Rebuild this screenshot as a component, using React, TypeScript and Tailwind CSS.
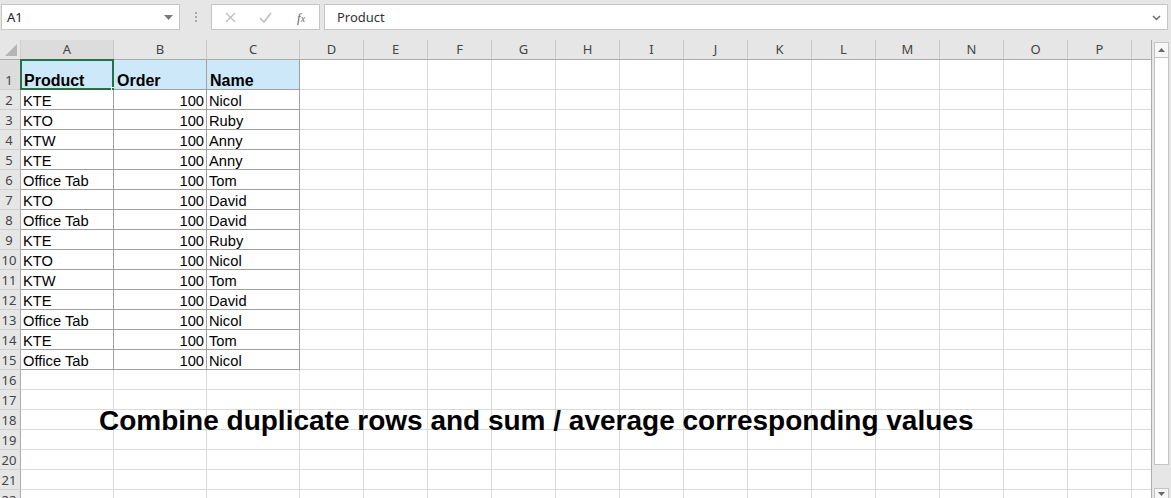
import React from "react";

const COLS = ["A", "B", "C", "D", "E", "F", "G", "H", "I", "J", "K", "L", "M", "N", "O", "P"];
const data: [string, string, string][] = [
  ["KTE", "100", "Nicol"],
  ["KTO", "100", "Ruby"],
  ["KTW", "100", "Anny"],
  ["KTE", "100", "Anny"],
  ["Office Tab", "100", "Tom"],
  ["KTO", "100", "David"],
  ["Office Tab", "100", "David"],
  ["KTE", "100", "Ruby"],
  ["KTO", "100", "Nicol"],
  ["KTW", "100", "Tom"],
  ["KTE", "100", "David"],
  ["Office Tab", "100", "Nicol"],
  ["KTE", "100", "Tom"],
  ["Office Tab", "100", "Nicol"],
];

const ui = { fontFamily: '"Segoe UI", "Noto Sans", "Open Sans", sans-serif' };
const cellFont = { fontFamily: '"Liberation Sans", Arial, sans-serif' };

export default function App() {
  const rows = Array.from({ length: 22 }, (_, i) => i + 1);
  return (
    <div className="relative w-[1171px] h-[498px] overflow-hidden bg-[#e6e6e6]" style={ui}>
      {/* formula bar */}
      <div className="flex h-[40px] pt-[4px] items-start">
        <div className="ml-[1px] w-[179px] h-[26px] bg-white border border-[#c6c6c6] flex items-center pl-[5px] pr-[6px] pt-[1px]">
          <span className="text-[13px] text-[#222] flex-1">A1</span>
          <svg width="9" height="5" viewBox="0 0 9 5"><path d="M0 0h9L4.5 5z" fill="#7a7a7a" /></svg>
        </div>
        <div className="w-[31px] h-[26px] flex flex-col items-center justify-center gap-[2px]">
          <div className="w-[2px] h-[2px] bg-[#a8a8a8]" />
          <div className="w-[2px] h-[2px] bg-[#a8a8a8]" />
          <div className="w-[2px] h-[2px] bg-[#a8a8a8]" />
        </div>
        <div className="w-[109px] h-[26px] bg-white border border-[#c6c6c6] flex items-center pt-[1px]">
          <div className="w-[36px] flex justify-center pl-[2px]">
            <svg width="11" height="11" viewBox="0 0 11 11"><path d="M1 1l9 9M10 1l-9 9" stroke="#bdbdbd" strokeWidth="1.3" /></svg>
          </div>
          <div className="w-[36px] flex justify-center">
            <svg width="13" height="11" viewBox="0 0 13 11"><path d="M1 6l4 4 7-9" stroke="#bdbdbd" strokeWidth="1.6" fill="none" /></svg>
          </div>
          <div className="w-[36px] flex justify-center">
            <span className="text-[13px] italic text-[#666]" style={{ fontFamily: '"Liberation Serif", serif' }}>f<span className="text-[10px]">x</span></span>
          </div>
        </div>
        <div className="ml-[4px] w-[844px] h-[26px] bg-white border border-[#c6c6c6] flex items-center pl-[12px] pr-[6px] pt-[1px]">
          <span className="text-[13px] text-[#333] flex-1">Product</span>
          <svg width="9" height="6" viewBox="0 0 9 6"><path d="M1 1l3.5 3.5L8 1" stroke="#6a6a6a" strokeWidth="1.5" fill="none" /></svg>
        </div>
      </div>

      {/* sheet */}
      <div className="flex">
        <div className="w-[1152px] border-r border-[#ababab]">
          <div className="grid" style={{ gridTemplateColumns: "21px 93px 93px 93px repeat(13, 64px) 1fr" }}>
            {/* header row */}
            <div className="h-[20px] bg-[#e6e6e6] border-b border-[#ababab] border-r border-r-[#d0d0d0] flex items-end justify-end pr-[3px] pb-[3px]">
              <svg width="12" height="12" viewBox="0 0 12 12"><path d="M12 0V12H0z" fill="#b5b5b5" /></svg>
            </div>
            {COLS.map((c, i) => (
              <div
                key={c}
                className={`h-[20px] border-b border-[#ababab] border-r border-r-[#c8c8c8] flex items-center justify-center text-[13px] text-[#444] ${i === 0 ? "bg-[#dcdcdc]" : "bg-[#e6e6e6]"}`}
              >
                {c}
              </div>
            ))}
            <div className="h-[20px] bg-[#e6e6e6] border-b border-[#ababab]" />

            {rows.map((r) => {
              const h = r === 1 ? "h-[30px]" : "h-[20px]";
              const rec = r >= 2 && r <= 15 ? data[r - 2] : null;
              return (
                <React.Fragment key={r}>
                  <div
                    className={`${h} border-r border-[#ababab] border-b border-b-[#d0d0d0] flex items-end justify-center pr-[2px] text-[13px] text-[#444] leading-[17px] ${r === 1 ? "bg-[#dcdcdc]" : "bg-[#e6e6e6]"}`}
                  >
                    {r}
                  </div>
                  {COLS.map((c, ci) => {
                    const inTable = r <= 15 && ci < 3;
                    const border = inTable ? "border-[#a0a0a0]" : "border-[#dadada]";
                    const bg = r === 1 && ci < 3 ? "bg-[#cde8f9]" : "bg-white";
                    let content: React.ReactNode = null;
                    if (r === 1 && ci < 3) {
                      content = (
                        <span className="text-[16px] font-bold text-black leading-[17px] pl-[3px]">
                          {["Product", "Order", "Name"][ci]}
                        </span>
                      );
                    } else if (rec && ci < 3) {
                      content = (
                        <span
                          className={`text-[14.7px] text-black leading-[16px] ${ci === 1 ? "w-full text-right pr-[2px]" : "pl-[2px]"}`}
                        >
                          {rec[ci]}
                        </span>
                      );
                    }
                    const selected = r === 1 && ci === 0;
                    return (
                      <div
                        key={c}
                        className={`relative ${h} ${bg} border-r border-b ${border} flex items-end`}
                        style={cellFont}
                      >
                        {content}
                        {selected && (
                          <>
                            <div className="absolute left-[-1px] top-[-1px] right-[-1px] bottom-[-1px] border-2 border-[#217346] pointer-events-none" />
                            <div className="absolute right-[-4px] bottom-[-4px] w-[6px] h-[6px] bg-[#217346] border border-white" />
                          </>
                        )}
                      </div>
                    );
                  })}
                  <div className={`${h} bg-white border-b border-[#dadada]`} />
                </React.Fragment>
              );
            })}
          </div>
        </div>

        {/* vertical scrollbar */}
        <div className="w-[19px] flex flex-col items-center pt-[2px]">
          <div className="w-[15px] h-[16px] bg-[#f7f7f7] border border-[#c4c4c4] flex items-center justify-center">
            <svg width="7" height="4" viewBox="0 0 7 4"><path d="M0 4h7L3.5 0z" fill="#6a6a6a" /></svg>
          </div>
          <div className="w-[15px] h-[407px] bg-white border border-[#c4c4c4] border-t-0" />
          <div className="h-[23px]" />
          <div className="w-[15px] h-[16px] bg-[#f7f7f7] border border-[#c4c4c4] flex items-start justify-center pt-[3px]">
            <svg width="7" height="4" viewBox="0 0 7 4"><path d="M0 0h7L3.5 4z" fill="#6a6a6a" /></svg>
          </div>
        </div>
      </div>

      {/* overlay text */}
      <div
        className="absolute left-[99px] top-[407px] text-[28px] font-bold leading-none text-black whitespace-nowrap"
        style={cellFont}
      >
        Combine duplicate rows and sum / average corresponding values
      </div>
    </div>
  );
}
